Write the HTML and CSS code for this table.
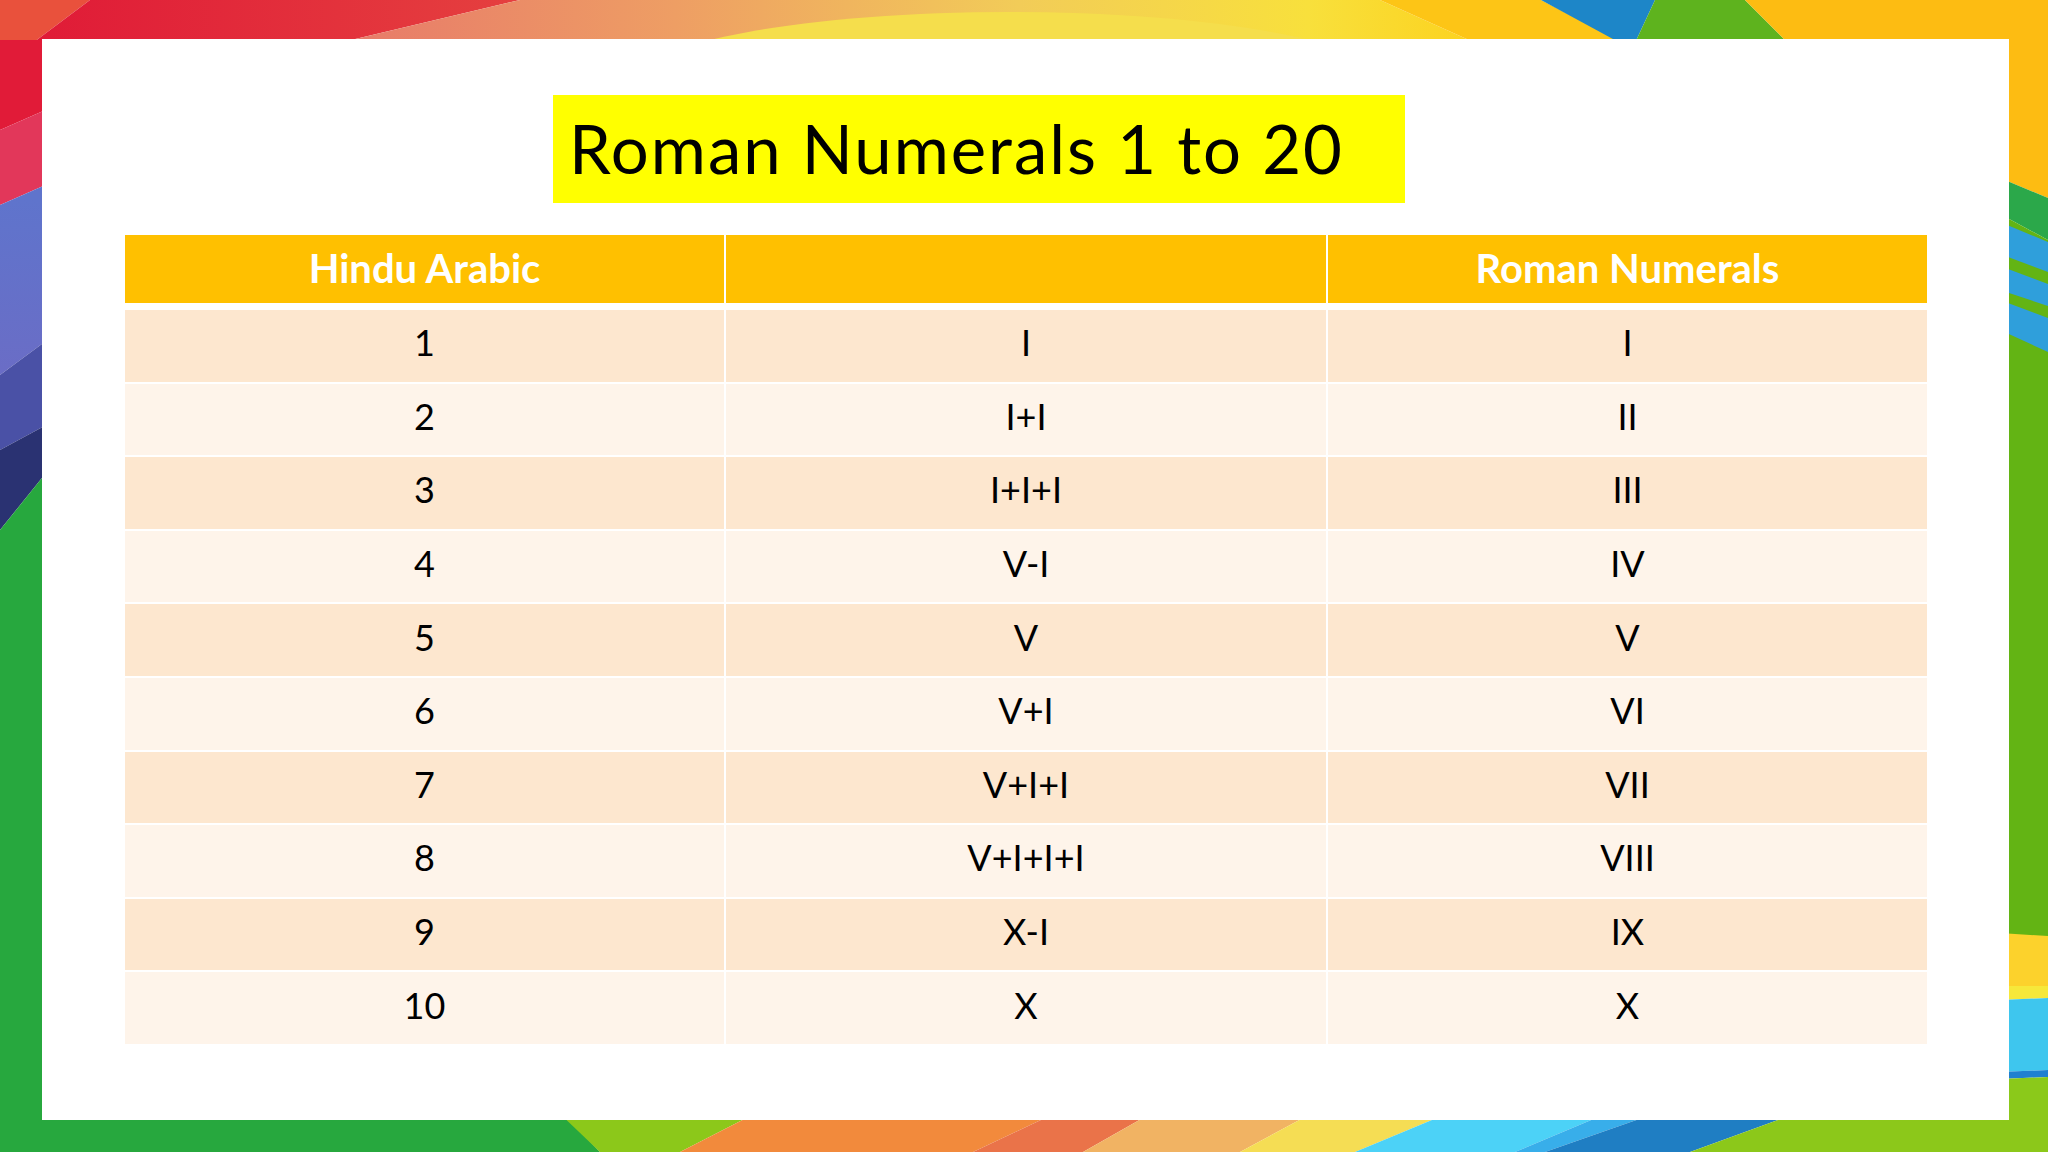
FILE: index.html
```html
<!DOCTYPE html>
<html lang="en">
<head>
<meta charset="utf-8">
<title>Roman Numerals 1 to 20</title>
<link rel="stylesheet" href="styles.css">
</head>
<body>
<div class="stage">
  <svg class="backdrop" viewBox="0 0 2048 1152" width="2048" height="1152" aria-hidden="true">
    <defs>
      <linearGradient id="topWarm" x1="330" y1="0" x2="1480" y2="0" gradientUnits="userSpaceOnUse">
        <stop offset="0" stop-color="#E7786A"/>
        <stop offset="0.3" stop-color="#EE9E64"/>
        <stop offset="0.6" stop-color="#F2CC58"/>
        <stop offset="0.85" stop-color="#F8E03C"/>
        <stop offset="1" stop-color="#FCD21E"/>
      </linearGradient>
      <linearGradient id="redBand" x1="40" y1="0" x2="520" y2="0" gradientUnits="userSpaceOnUse">
        <stop offset="0" stop-color="#E01B37"/>
        <stop offset="1" stop-color="#E5403F"/>
      </linearGradient>
      <linearGradient id="periwinkle" x1="0" y1="200" x2="0" y2="370" gradientUnits="userSpaceOnUse">
        <stop offset="0" stop-color="#5F74CC"/>
        <stop offset="1" stop-color="#6A6DC6"/>
      </linearGradient>
    </defs>
    <!-- top strip -->
    <polygon points="0,0 90,0 30,45 0,45" fill="#E9513C"/>
    <polygon points="90,0 520,0 330,45 30,45" fill="url(#redBand)"/>
    <polygon points="520,0 1380,0 1480,45 330,45" fill="url(#topWarm)"/>
    <ellipse cx="1010" cy="80" rx="370" ry="68" fill="#F5DE4C"/>
    <polygon points="1380,0 1541,0 1628,45 1480,45" fill="#FDC516"/>
    <polygon points="1541,0 1655,0 1634,45 1624,45" fill="#1D86C8"/>
    <polygon points="1655,0 1745,0 1790,45 1634,45" fill="#5EB31E"/>
    <!-- right strip -->
    <polygon points="1745,0 2048,0 2048,198 2000,178 1790,45" fill="#FDBC12"/>
    <polygon points="2000,178 2048,198 2048,240 2000,214" fill="#2BA84A"/>
    <polygon points="2000,214 2048,240 2048,936 2000,936" fill="#63B414"/>
    <polygon points="2000,222 2048,242 2048,272 2000,254" fill="#2F9FDB"/>
    <polygon points="2000,266 2048,284 2048,306 2000,290" fill="#2F9FDB"/>
    <polygon points="2000,300 2048,318 2048,352 2000,330" fill="#2F9FDB"/>
    <polygon points="2000,933 2048,936 2048,986 2000,986" fill="#FCD22C"/>
    <polygon points="2000,986 2048,986 2048,998 2000,1000" fill="#F6E83A"/>
    <polygon points="2000,1000 2048,998 2048,1070 2000,1072" fill="#3EC6EE"/>
    <polygon points="2000,1072 2048,1070 2048,1077 2000,1079" fill="#1F80D0"/>
    <polygon points="2000,1079 2048,1077 2048,1152 2000,1152" fill="#8BC91A"/>
    <!-- left strip -->
    <polygon points="0,40 50,40 50,108 0,130" fill="#E11B38"/>
    <polygon points="0,130 50,108 50,183 0,205" fill="#E2375A"/>
    <polygon points="0,205 50,183 50,338 0,375" fill="url(#periwinkle)"/>
    <polygon points="0,375 50,338 50,423 0,450" fill="#4A51A6"/>
    <polygon points="0,450 50,423 50,468 0,530" fill="#2A3272"/>
    <polygon points="0,530 50,468 50,1152 0,1152" fill="#27A83E"/>
    <!-- bottom strip -->
    <polygon points="0,1110 560,1110 600,1152 0,1152" fill="#27A83E"/>
    <polygon points="556,1110 762,1110 680,1152 600,1152" fill="#8CC81A"/>
    <polygon points="762,1110 1062,1110 973,1152 680,1152" fill="#F28A3C"/>
    <polygon points="1062,1110 1157,1110 1083,1152 973,1152" fill="#EA7349"/>
    <polygon points="1157,1110 1318,1110 1240,1152 1083,1152" fill="#F1B363"/>
    <polygon points="1318,1110 1456,1110 1355,1152 1240,1152" fill="#F5DD54"/>
    <polygon points="1456,1110 1615,1110 1515,1152 1355,1152" fill="#4CD2F7"/>
    <polygon points="1615,1110 1665,1110 1545,1152 1515,1152" fill="#38AEEA"/>
    <polygon points="1665,1110 1805,1110 1690,1152 1545,1152" fill="#1F7EC3"/>
    <polygon points="1805,1110 2048,1110 2048,1152 1690,1152" fill="#8CC81A"/>
  </svg>

  <main class="slide">
    <h1 class="title">Roman Numerals 1 to 20</h1>
    <div class="table">
      <div class="row head"><div class="cell">Hindu Arabic</div><div class="cell"></div><div class="cell">Roman Numerals</div></div>
      <div class="row band-a"><div class="cell">1</div><div class="cell">I</div><div class="cell">I</div></div>
      <div class="row band-b"><div class="cell">2</div><div class="cell">I+I</div><div class="cell">II</div></div>
      <div class="row band-a"><div class="cell">3</div><div class="cell">I+I+I</div><div class="cell">III</div></div>
      <div class="row band-b"><div class="cell">4</div><div class="cell">V-I</div><div class="cell">IV</div></div>
      <div class="row band-a"><div class="cell">5</div><div class="cell">V</div><div class="cell">V</div></div>
      <div class="row band-b"><div class="cell">6</div><div class="cell">V+I</div><div class="cell">VI</div></div>
      <div class="row band-a"><div class="cell">7</div><div class="cell">V+I+I</div><div class="cell">VII</div></div>
      <div class="row band-b"><div class="cell">8</div><div class="cell">V+I+I+I</div><div class="cell">VIII</div></div>
      <div class="row band-a"><div class="cell">9</div><div class="cell">X-I</div><div class="cell">IX</div></div>
      <div class="row band-b"><div class="cell">10</div><div class="cell">X</div><div class="cell">X</div></div>
    </div>
  </main>
</div>
</body>
</html>
```

FILE: styles.css
```css
html, body {
  margin: 0;
  padding: 0;
  background: #ffffff;
}

.stage {
  display: grid;
  width: 2048px;
  height: 1152px;
  overflow: hidden;
}

.backdrop,
.slide {
  grid-area: 1 / 1;
}

.backdrop {
  display: block;
  width: 2048px;
  height: 1152px;
}

.slide {
  margin: 39px 0 0 42px;
  width: 1967px;
  height: 1081px;
  box-sizing: border-box;
  padding: 56px 0 0 83px;
  background: #ffffff;
  font-family: Lato, "Noto Sans", "Liberation Sans", sans-serif;
}

.title {
  margin: 0 0 0 428px;
  width: 852px;
  height: 108px;
  box-sizing: border-box;
  padding-left: 16px;
  background: #ffff00;
  color: #000000;
  font-size: 67px;
  font-weight: 400;
  letter-spacing: 2px;
  line-height: 106px;
  white-space: nowrap;
}

.table {
  display: grid;
  grid-template-columns: 599px 600px 599px;
  grid-template-rows: 73px;
  grid-auto-rows: 71.6px;
  column-gap: 2px;
  row-gap: 2px;
  width: 1800px;
  margin-top: 32px;
}

.row {
  display: contents;
}

.cell {
  display: flex;
  align-items: center;
  justify-content: center;
  box-sizing: border-box;
  padding-bottom: 7px;
  font-size: 36px;
  color: #000000;
}

.head .cell {
  margin-bottom: 5px;
  padding-bottom: 3px;
  background: #ffc000;
  color: #ffffff;
  font-size: 40px;
  font-weight: 700;
}

.band-a .cell {
  background: #fde7cf;
}

.band-b .cell {
  background: #fef4ea;
}
```
